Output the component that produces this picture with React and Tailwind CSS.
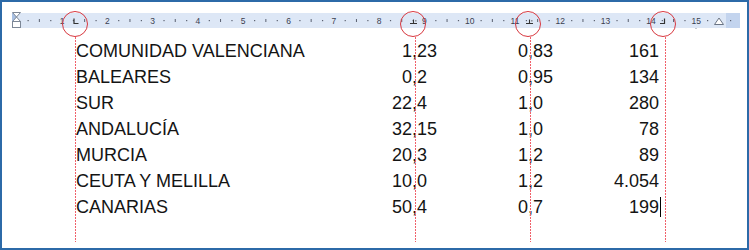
import React from 'react'

const rows = [
  { name: 'COMUNIDAD VALENCIANA', a: ['1', ',23'], b: ['0', ',83'], c: '161' },
  { name: 'BALEARES', a: ['0', ',2'], b: ['0', ',95'], c: '134' },
  { name: 'SUR', a: ['22', ',4'], b: ['1', ',0'], c: '280' },
  { name: 'ANDALUCÍA', a: ['32', ',15'], b: ['1', ',0'], c: '78' },
  { name: 'MURCIA', a: ['20', ',3'], b: ['1', ',2'], c: '89' },
  { name: 'CEUTA Y MELILLA', a: ['10', ',0'], b: ['1', ',2'], c: '4.054' },
  { name: 'CANARIAS', a: ['50', ',4'], b: ['0', ',7'], c: '199', cursor: true },
]

// cm -> page x
const cm = (n) => 16.7 + 45.3 * n

function Ruler() {
  const marks = []
  for (let n = 0; n < 16; n++) {
    for (let q = 1; q <= 3; q++) {
      const x = cm(n + q / 4)
      if (x > 714) continue
      if (q === 2) {
        marks.push(<rect key={`t${n}${q}`} x={x - 0.5} y={19} width={1} height={3} fill="#5a6070" />)
      } else {
        marks.push(<rect key={`d${n}${q}`} x={x - 0.5} y={20} width={1.2} height={1.2} fill="#5a6070" />)
      }
    }
    if (n > 0) {
      marks.push(
        <text key={`n${n}`} x={cm(n)} y={23.5} textAnchor="middle" fontSize="8.5" fill="#3a4050"
          fontFamily="'Liberation Sans', Arial, sans-serif">{n}</text>
      )
    }
  }
  return (
    <svg width="745" height="30" viewBox="2 2 745 30" className="block">
      <rect x="12" y="13" width="728" height="15" fill="#dde7f6" />
      <rect x="12" y="13" width="5" height="15" fill="#a9c1e4" />
      <rect x="726" y="13" width="14" height="15" fill="#c3d4ee" />
      {marks}
      <rect x="730" y="20" width="1.2" height="1.2" fill="#5a6070" />
      <rect x="695.5" y="28" width="1" height="1" fill="#8a93a3" />
      {/* indent markers */}
      <path d="M12.5 12.5 H20.5 L16.5 17 Z" fill="#fff" stroke="#7d8796" strokeWidth="1" />
      <path d="M16.5 17 L20.5 21.5 H12.5 Z" fill="#fff" stroke="#7d8796" strokeWidth="1" />
      <rect x="12.5" y="21.5" width="8" height="6" fill="#fff" stroke="#7d8796" strokeWidth="1" />
      <path d="M719 18 L723.5 24.5 H714.5 Z" fill="#fff" stroke="#6b7585" strokeWidth="1" />
      {/* tab stops */}
      <path d="M74 18.5 V23.5 H78.5" fill="none" stroke="#333" strokeWidth="1.2" />
      <path d="M413.5 19.5 V23.5 M410 23.5 H417" fill="none" stroke="#333" strokeWidth="1.1" />
      <rect x="415.3" y="20.3" width="1.1" height="1.1" fill="#333" />
      <path d="M529.5 19.5 V23.5 M526 23.5 H533" fill="none" stroke="#333" strokeWidth="1.1" />
      <rect x="531.3" y="20.3" width="1.1" height="1.1" fill="#333" />
      <path d="M664.5 18.5 V23.5 H660" fill="none" stroke="#333" strokeWidth="1.2" />
    </svg>
  )
}

export default function App() {
  const tabs = [75, 415, 530, 665]
  const circles = [75, 413, 528, 663]

  return (
    <div className="relative w-[749px] h-[250px] overflow-hidden border-2 border-[#2c6aa8] bg-white">
      <Ruler />

      <div className="mt-[6px] pl-[74px] text-[18px] leading-[26px] text-[#141414]"
        style={{ fontFamily: "'Liberation Sans', Arial, sans-serif" }}>
        {rows.map((r) => (
          <div key={r.name} className="flex whitespace-nowrap">
            <span className="w-[296px]">{r.name}</span>
            <span className="w-[40px] text-right">{r.a[0]}</span>
            <span className="w-[76px]">{r.a[1]}</span>
            <span className="w-[40px] text-right">{r.b[0]}</span>
            <span className="w-[62px]">{r.b[1]}</span>
            <span className="relative w-[69px] text-right">
              {r.c}
              {r.cursor && <span className="absolute right-[-2px] top-[3px] h-[20px] w-[1px] bg-black" />}
            </span>
          </div>
        ))}
      </div>

      {tabs.map((x) => (
        <div key={x}
          className="absolute top-[35px] h-[205px] w-px bg-[repeating-linear-gradient(to_bottom,#f0606a_0px,#f0606a_2px,transparent_2px,transparent_3px)]"
          style={{ left: x - 2 }} />
      ))}
      {circles.map((x) => (
        <div key={x} className="absolute top-[9px] h-[26px] w-[26px] rounded-full border-[1.5px] border-[#d8383f]"
          style={{ left: x - 2 - 13 }} />
      ))}
    </div>
  )
}
